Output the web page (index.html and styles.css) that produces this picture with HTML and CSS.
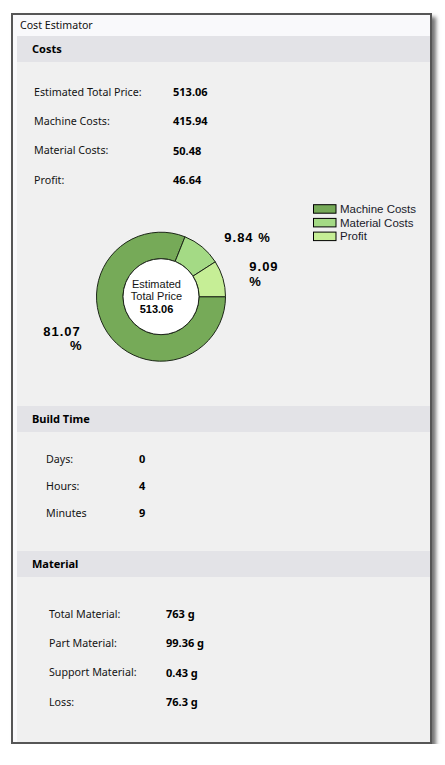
FILE: index.html
```html
<!DOCTYPE html>
<html>
<head>
<meta charset="utf-8">
<title>Cost Estimator</title>
<link rel="stylesheet" href="styles.css">
</head>
<body>
<div class="window">
  <div class="title">Cost Estimator</div>
  <div class="panel">
    <section class="section costs">
      <div class="header">Costs</div>
      <div class="rows rows-costs">
        <div class="row"><span class="label">Estimated Total Price:</span><span class="value">513.06</span></div>
        <div class="row"><span class="label">Machine Costs:</span><span class="value">415.94</span></div>
        <div class="row"><span class="label">Material Costs:</span><span class="value">50.48</span></div>
        <div class="row"><span class="label">Profit:</span><span class="value">46.64</span></div>
      </div>
      <div class="chart">
        <svg class="chart-svg" width="413" height="212" viewBox="0 0 413 212">
          <path class="slice machine" d="M168.01 42.83 A64.5 64.5 0 1 0 208.5 102.7 L182 102.7 A38 38 0 1 1 158.14 67.43 Z"/>
          <path class="slice material" d="M198.27 67.84 A64.5 64.5 0 0 0 168.01 42.83 L158.14 67.43 A38 38 0 0 1 175.97 82.16 Z"/>
          <path class="slice profit" d="M208.5 102.7 A64.5 64.5 0 0 0 198.27 67.84 L175.97 82.16 A38 38 0 0 1 182 102.7 Z"/>
          <circle class="hole" cx="144" cy="102.7" r="38"/>
          <text class="pct" x="207.3" y="48.4">9.84 %</text>
          <text class="pct" x="232.3" y="76.7"><tspan x="232.3">9.09</tspan><tspan x="232.3" dy="15.7">%</tspan></text>
          <text class="pct" x="26.3" y="141.7"><tspan x="26.3">81.07</tspan><tspan x="53" dy="14.7">%</tspan></text>
          <rect class="lbox machine" x="296.5" y="10.7" width="22.5" height="8.5"/>
          <rect class="lbox material" x="296.5" y="24.4" width="22.5" height="8.5"/>
          <rect class="lbox profit" x="296.5" y="38.1" width="22.5" height="8.5"/>
          <text class="legend-text" x="323" y="19">Machine Costs</text>
          <text class="legend-text" x="323" y="32.7">Material Costs</text>
          <text class="legend-text" x="323" y="46.3">Profit</text>
        </svg>
        <div class="center-label">
          <div>Estimated</div>
          <div>Total Price</div>
          <div class="center-bold">513.06</div>
        </div>
      </div>
    </section>
    <section class="section build">
      <div class="header">Build Time</div>
      <div class="rows rows-build">
        <div class="row"><span class="label">Days:</span><span class="value">0</span></div>
        <div class="row"><span class="label">Hours:</span><span class="value">4</span></div>
        <div class="row"><span class="label">Minutes</span><span class="value">9</span></div>
      </div>
    </section>
    <section class="section material-sec">
      <div class="header">Material</div>
      <div class="rows rows-material">
        <div class="row"><span class="label">Total Material:</span><span class="value">763 g</span></div>
        <div class="row"><span class="label">Part Material:</span><span class="value">99.36 g</span></div>
        <div class="row"><span class="label">Support Material:</span><span class="value">0.43 g</span></div>
        <div class="row"><span class="label">Loss:</span><span class="value">76.3 g</span></div>
      </div>
    </section>
  </div>
</div>
</body>
</html>
```
FILE: styles.css
```css
html, body {
  margin: 0;
  padding: 0;
  background: #ffffff;
}

body {
  font-family: "Noto Sans", "Open Sans", sans-serif;
  color: #141414;
}

.window {
  margin: 13px 0 0 11px;
  width: 421px;
  box-sizing: border-box;
  border: 2px solid #565656;
  background: #f9f9fb;
  box-shadow: 4px 4px 4px rgba(0, 0, 0, 0.55);
}

.title {
  height: 21px;
  line-height: 21px;
  padding-left: 7px;
  font-size: 10.6px;
  color: #101010;
}

.panel {
  margin-left: 4px;
  background: #f0f0f0;
}

.header {
  height: 26px;
  line-height: 26px;
  padding-left: 15px;
  background: #e3e3e7;
  font-size: 11px;
  font-weight: 700;
  color: #000;
}

.rows {
  display: flex;
  flex-direction: column;
}

.row {
  display: grid;
  height: 29.33px;
  align-items: center;
  font-size: 10.7px;
}

.label {
  color: #141414;
}

.value {
  font-weight: 700;
  font-size: 11px;
  color: #000;
}

.rows-costs {
  padding: 15px 0 0 17px;
}
.rows-costs .row {
  grid-template-columns: 139px 1fr;
}

.rows-build {
  padding: 13px 0 25px 29px;
}
.rows-build .row {
  height: 27px;
  grid-template-columns: 93px 1fr;
}

.rows-material {
  padding: 21.7px 0 26px 32px;
}
.rows-material .row {
  grid-template-columns: 117px 1fr;
}

.chart {
  position: relative;
  height: 212px;
}

.chart-svg {
  display: block;
}

.center-label {
  position: absolute;
  left: 89px;
  top: 83.4px;
  width: 101px;
  text-align: center;
  font-family: "Liberation Sans", Arial, sans-serif;
  font-size: 11px;
  line-height: 12.4px;
  color: #141414;
}

.center-bold {
  font-weight: 700;
  color: #000;
}

.slice {
  stroke: #1c2618;
  stroke-width: 1;
  stroke-linejoin: round;
}

.machine {
  fill: #76aa58;
}

.material {
  fill: #a4da85;
}

.profit {
  fill: #c6ee96;
}

.hole {
  fill: #ffffff;
  stroke: #1c2618;
  stroke-width: 1;
}

.pct {
  font-family: "Liberation Sans", Arial, sans-serif;
  font-size: 13px;
  font-weight: 700;
  letter-spacing: 1px;
  fill: #000;
}

.lbox {
  stroke: #000;
  stroke-width: 1;
}

.legend-text {
  font-family: "Liberation Sans", Arial, sans-serif;
  font-size: 11.5px;
  fill: #1a1a2a;
}
```
